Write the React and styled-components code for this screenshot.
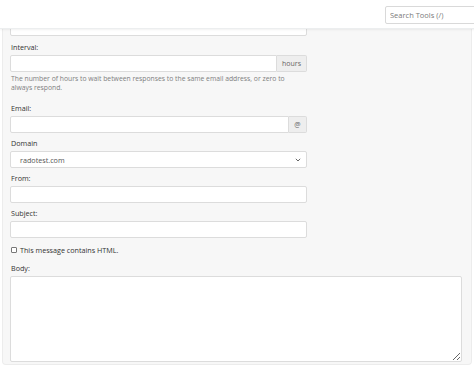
import React from "react";
import styled, { createGlobalStyle } from "styled-components";

const Global = createGlobalStyle`
  html, body { margin: 0; padding: 0; background: #ffffff; overflow: hidden; }
  body { font-family: "Open Sans", "Noto Sans", sans-serif; color: #333; }
  * { box-sizing: border-box; }
`;

const Page = styled.div`
  width: 474px;
  height: 367px;
  position: relative;
  overflow: hidden;
  background: #fff;
`;

const Header = styled.header`
  position: relative;
  z-index: 2;
  height: 29px;
  background: #fff;
  display: flex;
  align-items: center;
  justify-content: flex-end;
  box-shadow: 0 1px 2px rgba(0, 0, 0, 0.06);
  border-bottom: 1px solid #eceeef;
  margin-right: -14px;
`;

const Search = styled.input`
  width: 103px;
  height: 18px;
  margin-top: 1px;
  border: 1px solid #d9d9d9;
  border-radius: 2px;
  padding: 0 4px;
  font-family: "Open Sans", sans-serif;
  font-size: 7.5px;
  color: #555;
  background: #fff;
  &::placeholder { color: #7a7a7a; }
  outline: none;
`;

const Panel = styled.main`
  position: relative;
  z-index: 1;
  margin: -13px 2px 0 2px;
  height: 349px;
  background: #f7f7f7;
  border: 1px solid #ececec;
  border-top: none;
  border-radius: 0 0 4px 4px;
  padding: 0 9px 0 7px;
`;

const Form = styled.div`
  display: flex;
  flex-direction: column;
`;

const Group = styled.div`
  width: ${(p) => (p.$wide ? "452px" : "297px")};
  display: flex;
  flex-direction: column;
  margin-bottom: ${(p) => p.$mb ?? 5}px;
`;

const Label = styled.label`
  font-size: 7.2px;
  line-height: 10px;
  font-weight: 500;
  color: #333;
  margin-bottom: 3px;
  margin-left: 1px;
`;

const Field = styled.input`
  display: block;
  width: 100%;
  height: 17px;
  flex: none;
  border: 1px solid #dcdcdc;
  border-radius: 2px;
  background: #fff;
  font-family: "Open Sans", sans-serif;
  font-size: 7.5px;
  padding: 0 8px;
  color: #555;
  outline: none;
`;

const InputGroup = styled.div`
  display: flex;
  height: 17px;
  ${Field} {
    flex: 1;
    min-width: 0;
    border-radius: 2px 0 0 2px;
  }
`;

const Addon = styled.span`
  width: ${(p) => p.$w}px;
  flex: none;
  display: flex;
  align-items: center;
  justify-content: center;
  background: #eeeeee;
  border: 1px solid #dcdcdc;
  border-left: none;
  border-radius: 0 2px 2px 0;
  font-size: 7px;
  color: #666;
`;

const Help = styled.p`
  margin: 2px 0 0 1px;
  font-size: 6.8px;
  line-height: 9px;
  color: #808080;
`;

const SelectBox = styled.div`
  height: 17px;
  border: 1px solid #dcdcdc;
  border-radius: 2px;
  background: #fff;
  display: flex;
  align-items: center;
  justify-content: space-between;
  padding: 0 5px 0 9px;
  font-size: 7.2px;
  color: #555;
`;

const CheckRow = styled.label`
  display: flex;
  align-items: center;
  gap: 3px;
  height: 10px;
  margin: 7px 0 8px 1px;
  font-size: 7.2px;
  color: #333;
`;

const Box = styled.span`
  width: 6px;
  height: 6px;
  border: 1px solid #777;
  border-radius: 1px;
  background: #fff;
`;

const TextArea = styled.textarea`
  display: block;
  width: 452px;
  height: 86px;
  border: 1px solid #dcdcdc;
  border-radius: 2px;
  background: #fff;
  resize: both;
  outline: none;
`;

const CutText = styled.span`
  position: absolute;
  left: 9px;
  top: -1px;
  font-size: 7.5px;
  color: #888;
`;

const CutField = styled.div`
  position: relative;
  width: 297px;
  height: 17px;
  border: 1px solid #dcdcdc;
  border-radius: 2px;
  background: #fff;
  margin-top: 3px;
  margin-bottom: 6px;
`;

export default function App() {
  return (
    <Page>
      <Global />
      <Header>
        <Search placeholder="Search Tools (/)" />
      </Header>
      <Panel>
        <Form>
          <CutField>
            <CutText>GET</CutText>
          </CutField>
          <Group $mb={11}>
            <Label>Interval:</Label>
            <InputGroup>
              <Field />
              <Addon $w={30}>hours</Addon>
            </InputGroup>
            <Help>
              The number of hours to wait between responses to the same email address, or zero to
              <br />
              always respond.
            </Help>
          </Group>
          <Group>
            <Label>Email:</Label>
            <InputGroup>
              <Field />
              <Addon $w={18}>@</Addon>
            </InputGroup>
          </Group>
          <Group>
            <Label>Domain</Label>
            <SelectBox>
              <span>radotest.com</span>
              <svg width="6" height="4" viewBox="0 0 6 4">
                <path d="M0.8 0.8 L3 3 L5.2 0.8" fill="none" stroke="#555" strokeWidth="0.9" />
              </svg>
            </SelectBox>
          </Group>
          <Group>
            <Label>From:</Label>
            <Field />
          </Group>
          <Group $mb={0}>
            <Label>Subject:</Label>
            <Field />
          </Group>
          <CheckRow>
            <Box />
            This message contains HTML.
          </CheckRow>
          <Group $wide $mb={0}>
            <Label>Body:</Label>
            <TextArea />
          </Group>
        </Form>
      </Panel>
    </Page>
  );
}
